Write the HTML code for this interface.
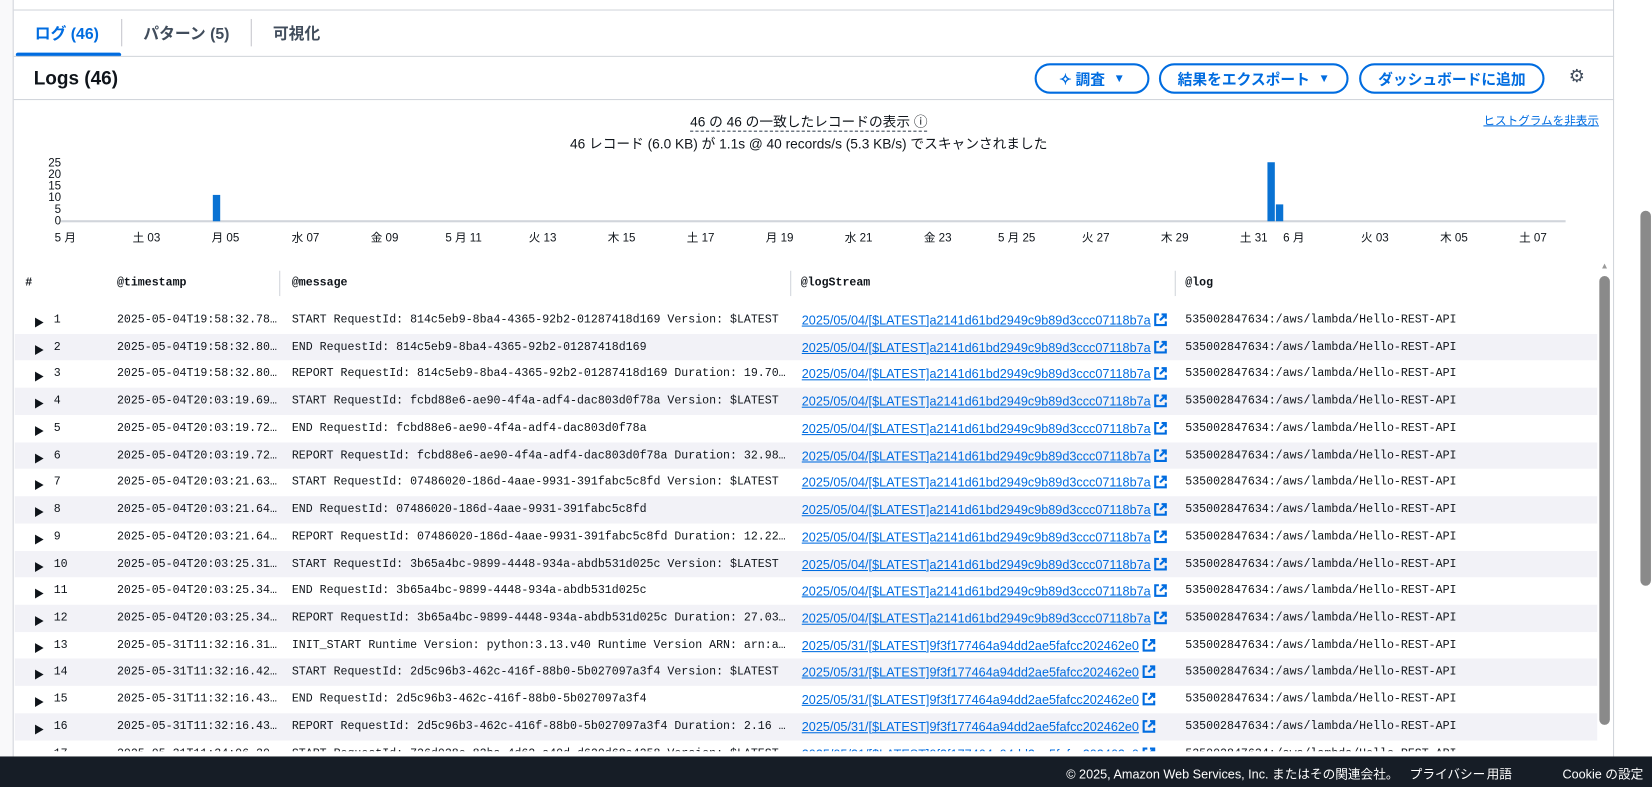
<!DOCTYPE html><html><head><meta charset="utf-8"><style>
*{box-sizing:border-box;margin:0;padding:0}
body{width:1652px;height:787px;overflow:hidden;background:#fff;font-family:"Liberation Sans","Noto Sans CJK JP",sans-serif;color:#0f141a;position:relative}
#w{position:absolute;left:0;top:0;width:1568px;height:747px;transform:scale(1.05357);transform-origin:0 0}
.abs{position:absolute;white-space:nowrap}
.mono{font-family:"Liberation Mono","Noto Sans CJK JP",monospace;font-size:11px}
.btn{position:absolute;top:60px;height:29px;border:2px solid #006ce0;border-radius:16px;color:#006ce0;font-weight:bold;font-size:14px;display:flex;align-items:center;justify-content:center;gap:8px}
.row{position:absolute;left:14px;width:1502px;height:25.7px}
.row span{position:absolute;top:7px;white-space:nowrap}
.lnk{color:#006ce0;text-decoration:underline}
.tk{position:absolute;top:217px;font-size:11px;transform:translateX(-50%);white-space:nowrap}
</style></head><body><div id="w">
<div class="abs" style="left:0;top:0;width:13px;height:718px;background:#f9f9fa;border-right:1px solid #d1d5db"></div>
<div class="abs" style="left:13px;top:9px;width:1519px;height:1px;background:#d1d5db"></div>
<div class="abs" style="left:1531px;top:0;width:1px;height:718px;background:#d1d5db"></div>
<div class="abs" style="left:33px;top:21px;font-size:15px;font-weight:bold;color:#006ce0">ログ (46)</div>
<div class="abs" style="left:15px;top:50px;width:100px;height:4px;background:#006ce0;border-radius:2px"></div>
<div class="abs" style="left:115px;top:18px;width:1px;height:26px;background:#c6c6cd"></div>
<div class="abs" style="left:136px;top:21px;font-size:15px;font-weight:bold;color:#414d5c">パターン (5)</div>
<div class="abs" style="left:238px;top:18px;width:1px;height:26px;background:#c6c6cd"></div>
<div class="abs" style="left:259px;top:21px;font-size:15px;font-weight:bold;color:#414d5c">可視化</div>
<div class="abs" style="left:13px;top:53px;width:1519px;height:1px;background:#d1d5db"></div>
<div class="abs" style="left:32px;top:64px;font-size:18px;font-weight:bold">Logs (46)</div>
<div class="btn" style="left:982px;width:109px"><span>✧ 調査</span><span style="font-size:11px">▼</span></div>
<div class="btn" style="left:1100px;width:180px"><span>結果をエクスポート</span><span style="font-size:11px">▼</span></div>
<div class="btn" style="left:1290px;width:176px">ダッシュボードに追加</div>
<div class="abs" style="left:1489px;top:63px;font-size:17px;color:#414d5c">⚙</div>
<div class="abs" style="left:13px;top:94px;width:1519px;height:1px;background:#d1d5db"></div>
<div class="abs" style="left:655px;top:105px;font-size:13px;border-bottom:1px dashed #414d5c">46 の 46 の一致したレコードの表示 ⓘ</div>
<div class="abs" style="left:541px;top:126px;font-size:13px">46 レコード (6.0 KB) が 1.1s @ 40 records/s (5.3 KB/s) でスキャンされました</div>
<div class="abs lnk" style="left:1408px;top:106px;font-size:11px">ヒストグラムを非表示</div>
<div class="abs" style="left:44px;top:150px;font-size:11px;line-height:11px;text-align:right;width:14px">25<br>20<br>15<br>10<br>5<br>0</div>
<div class="abs" style="left:58px;top:209px;width:1428px;height:2px;background:#d1d5db"></div>
<div class="abs" style="left:202px;top:185px;width:7px;height:25px;background:#0972d3"></div>
<div class="abs" style="left:1203px;top:154px;width:7px;height:56px;background:#0972d3"></div>
<div class="abs" style="left:1211px;top:194px;width:7px;height:16px;background:#0972d3"></div>
<div class="tk" style="left:62px">5 月</div><div class="tk" style="left:139px">土 03</div><div class="tk" style="left:214px">月 05</div><div class="tk" style="left:290px">水 07</div><div class="tk" style="left:365px">金 09</div><div class="tk" style="left:440px">5 月 11</div><div class="tk" style="left:515px">火 13</div><div class="tk" style="left:590px">木 15</div><div class="tk" style="left:665px">土 17</div><div class="tk" style="left:740px">月 19</div><div class="tk" style="left:815px">水 21</div><div class="tk" style="left:890px">金 23</div><div class="tk" style="left:965px">5 月 25</div><div class="tk" style="left:1040px">火 27</div><div class="tk" style="left:1115px">木 29</div><div class="tk" style="left:1190px">土 31</div><div class="tk" style="left:1228px">6 月</div><div class="tk" style="left:1305px">火 03</div><div class="tk" style="left:1380px">木 05</div><div class="tk" style="left:1455px">土 07</div>
<div class="abs mono" style="left:24px;top:263px;font-weight:bold">#</div>
<div class="abs mono" style="left:111px;top:263px;font-weight:bold">@timestamp</div>
<div class="abs" style="left:265px;top:257px;width:1px;height:24px;background:#d1d5db"></div>
<div class="abs mono" style="left:277px;top:263px;font-weight:bold">@message</div>
<div class="abs" style="left:750px;top:257px;width:1px;height:24px;background:#d1d5db"></div>
<div class="abs mono" style="left:760px;top:263px;font-weight:bold">@logStream</div>
<div class="abs" style="left:1115px;top:257px;width:1px;height:24px;background:#d1d5db"></div>
<div class="abs mono" style="left:1125px;top:263px;font-weight:bold">@log</div>
<div id="rows" class="mono"></div>
<div class="abs" style="left:1518px;top:262px;width:10px;height:426px;background:#8a8a8a;border-radius:5px"></div>
<div class="abs" style="left:1519px;top:248px;font-size:8px;color:#999">▲</div>
<div class="abs" style="left:1557px;top:200px;width:10px;height:356px;background:#8a8a8a;border-radius:5px"></div>
<div class="abs" style="left:0;top:718px;width:1568px;height:29px;background:#161d26;color:#fff;font-size:12px">
<span class="abs" style="left:1012px;top:8px">© 2025, Amazon Web Services, Inc. またはその関連会社。</span>
<span class="abs" style="left:1338px;top:8px">プライバシー</span>
<span class="abs" style="left:1411px;top:8px">用語</span>
<span class="abs" style="left:1483px;top:8px">Cookie の設定</span></div>
</div>
<script>
var A="2025/05/04/[$LATEST]a2141d61bd2949c9b89d3ccc07118b7a",B="2025/05/31/[$LATEST]9f3f177464a94dd2ae5fafcc202462e0";
var d=[["2025-05-04T19:58:32.78…","START RequestId: 814c5eb9-8ba4-4365-92b2-01287418d169 Version: $LATEST",A],
["2025-05-04T19:58:32.80…","END RequestId: 814c5eb9-8ba4-4365-92b2-01287418d169",A],
["2025-05-04T19:58:32.80…","REPORT RequestId: 814c5eb9-8ba4-4365-92b2-01287418d169 Duration: 19.70…",A],
["2025-05-04T20:03:19.69…","START RequestId: fcbd88e6-ae90-4f4a-adf4-dac803d0f78a Version: $LATEST",A],
["2025-05-04T20:03:19.72…","END RequestId: fcbd88e6-ae90-4f4a-adf4-dac803d0f78a",A],
["2025-05-04T20:03:19.72…","REPORT RequestId: fcbd88e6-ae90-4f4a-adf4-dac803d0f78a Duration: 32.98…",A],
["2025-05-04T20:03:21.63…","START RequestId: 07486020-186d-4aae-9931-391fabc5c8fd Version: $LATEST",A],
["2025-05-04T20:03:21.64…","END RequestId: 07486020-186d-4aae-9931-391fabc5c8fd",A],
["2025-05-04T20:03:21.64…","REPORT RequestId: 07486020-186d-4aae-9931-391fabc5c8fd Duration: 12.22…",A],
["2025-05-04T20:03:25.31…","START RequestId: 3b65a4bc-9899-4448-934a-abdb531d025c Version: $LATEST",A],
["2025-05-04T20:03:25.34…","END RequestId: 3b65a4bc-9899-4448-934a-abdb531d025c",A],
["2025-05-04T20:03:25.34…","REPORT RequestId: 3b65a4bc-9899-4448-934a-abdb531d025c Duration: 27.03…",A],
["2025-05-31T11:32:16.31…","INIT_START Runtime Version: python:3.13.v40 Runtime Version ARN: arn:a…",B],
["2025-05-31T11:32:16.42…","START RequestId: 2d5c96b3-462c-416f-88b0-5b027097a3f4 Version: $LATEST",B],
["2025-05-31T11:32:16.43…","END RequestId: 2d5c96b3-462c-416f-88b0-5b027097a3f4",B],
["2025-05-31T11:32:16.43…","REPORT RequestId: 2d5c96b3-462c-416f-88b0-5b027097a3f4 Duration: 2.16 …",B],
["2025-05-31T11:34:06.30…","START RequestId: 726d038e-83ba-4d62-a40d-d620d68e4258 Version: $LATEST",B]];
var ic='<svg width="13" height="13" viewBox="0 0 13 13" style="position:relative;top:2px;margin-left:3px"><path d="M5 1.5H1.5v10h10V8M7.5 1.5h4v4M11.5 1.5L6 7" fill="none" stroke="#006ce0" stroke-width="2"/></svg>';
var h="";d.forEach(function(r,i){var y=291+i*25.73;if(y>705)return;
h+='<div class="row" style="top:'+y+'px;background:'+(i%2?'#f2f2f7':'#fff')+(i==16?';height:10px;overflow:hidden':'')+'"><span style="left:18px;font-size:10px;top:7px">▶</span><span style="left:37px">'+(i+1)+'</span><span style="left:97px">'+r[0]+'</span><span style="left:263px">'+r[1]+'</span><span style="left:747px;font-family:Liberation Sans,sans-serif;font-size:12px;top:4px"><span class="lnk" style="position:static">'+r[2]+'</span>'+ic+'</span><span style="left:1111px">535002847634:/aws/lambda/Hello-REST-API</span></div>';});
document.getElementById("rows").innerHTML=h;
</script>
</body></html>
